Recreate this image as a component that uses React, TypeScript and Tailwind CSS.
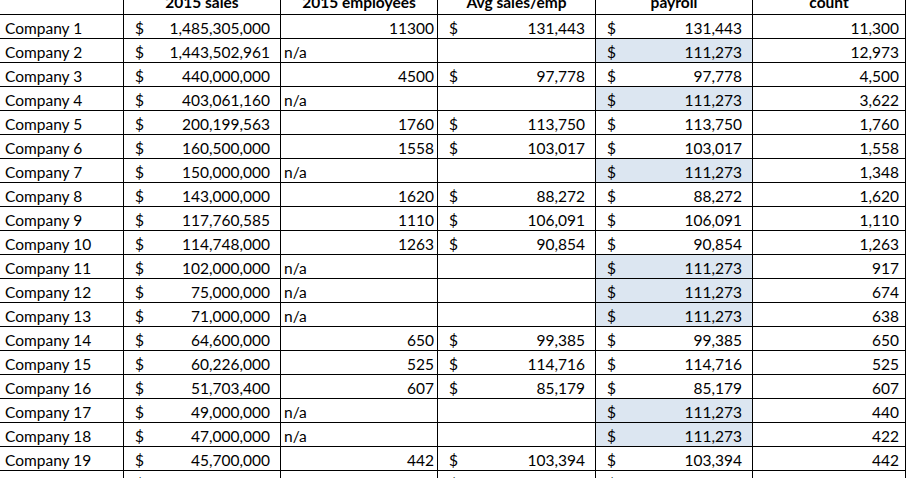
import React from 'react';

type Row = {
    name: string;
    sales: string;
    employees: string | null;
    avg: string | null;
    payroll: string;
    count: string;
};

const rows: Row[] = [
    { name: 'Company 1', sales: '1,485,305,000', employees: '11300', avg: '131,443', payroll: '131,443', count: '11,300' },
    { name: 'Company 2', sales: '1,443,502,961', employees: null, avg: null, payroll: '111,273', count: '12,973' },
    { name: 'Company 3', sales: '440,000,000', employees: '4500', avg: '97,778', payroll: '97,778', count: '4,500' },
    { name: 'Company 4', sales: '403,061,160', employees: null, avg: null, payroll: '111,273', count: '3,622' },
    { name: 'Company 5', sales: '200,199,563', employees: '1760', avg: '113,750', payroll: '113,750', count: '1,760' },
    { name: 'Company 6', sales: '160,500,000', employees: '1558', avg: '103,017', payroll: '103,017', count: '1,558' },
    { name: 'Company 7', sales: '150,000,000', employees: null, avg: null, payroll: '111,273', count: '1,348' },
    { name: 'Company 8', sales: '143,000,000', employees: '1620', avg: '88,272', payroll: '88,272', count: '1,620' },
    { name: 'Company 9', sales: '117,760,585', employees: '1110', avg: '106,091', payroll: '106,091', count: '1,110' },
    { name: 'Company 10', sales: '114,748,000', employees: '1263', avg: '90,854', payroll: '90,854', count: '1,263' },
    { name: 'Company 11', sales: '102,000,000', employees: null, avg: null, payroll: '111,273', count: '917' },
    { name: 'Company 12', sales: '75,000,000', employees: null, avg: null, payroll: '111,273', count: '674' },
    { name: 'Company 13', sales: '71,000,000', employees: null, avg: null, payroll: '111,273', count: '638' },
    { name: 'Company 14', sales: '64,600,000', employees: '650', avg: '99,385', payroll: '99,385', count: '650' },
    { name: 'Company 15', sales: '60,226,000', employees: '525', avg: '114,716', payroll: '114,716', count: '525' },
    { name: 'Company 16', sales: '51,703,400', employees: '607', avg: '85,179', payroll: '85,179', count: '607' },
    { name: 'Company 17', sales: '49,000,000', employees: null, avg: null, payroll: '111,273', count: '440' },
    { name: 'Company 18', sales: '47,000,000', employees: null, avg: null, payroll: '111,273', count: '422' },
    { name: 'Company 19', sales: '45,700,000', employees: '442', avg: '103,394', payroll: '103,394', count: '442' },
    { name: 'Company 20', sales: '44,500,000', employees: '410', avg: '108,537', payroll: '108,537', count: '410' },
];

// each spreadsheet cell: 24px tall incl. the 1px grid line
const cell = 'h-[24px] pt-[2px] border-r border-b border-black leading-[23px] whitespace-nowrap overflow-hidden';

const Money: React.FC<{ value: string; highlight?: boolean }> = ({ value, highlight }) => (
    <div className={`${cell} flex justify-between pl-[11px] pr-[10px] ${highlight ? 'bg-[#dce6f1]' : ''}`}>
        <span>$</span>
        <span>{value}</span>
    </div>
);

const App: React.FC = () => {
    const headers = ['', '2015 sales', '2015 employees', 'Avg sales/emp', 'payroll', 'count'];

    return (
        <div className="w-[910px] h-[478px] overflow-hidden bg-white text-black font-['Lato','Liberation_Sans',sans-serif] text-[15.5px]">
            <div className="grid grid-cols-[124px_157px_157px_158px_157px_153px]">
                {headers.map((h, i) => (
                    <div
                        key={i}
                        className="h-[15px] border-r border-b border-black flex items-end justify-center overflow-hidden font-bold"
                    >
                        <span className="leading-[24px] whitespace-nowrap">{h}</span>
                    </div>
                ))}

                {rows.map((r) => {
                    const missing = r.employees === null;
                    return (
                        <React.Fragment key={r.name}>
                            <div className={`${cell} pl-[5px]`}>{r.name}</div>
                            <Money value={r.sales} />
                            {missing ? (
                                <div className={`${cell} pl-[3px]`}>n/a</div>
                            ) : (
                                <div className={`${cell} text-right pr-[3px]`}>{r.employees}</div>
                            )}
                            {r.avg ? <Money value={r.avg} /> : <div className={cell}></div>}
                            <Money value={r.payroll} highlight={missing} />
                            <div className={`${cell} text-right pr-[6px]`}>{r.count}</div>
                        </React.Fragment>
                    );
                })}
            </div>
        </div>
    );
};

export default App;
